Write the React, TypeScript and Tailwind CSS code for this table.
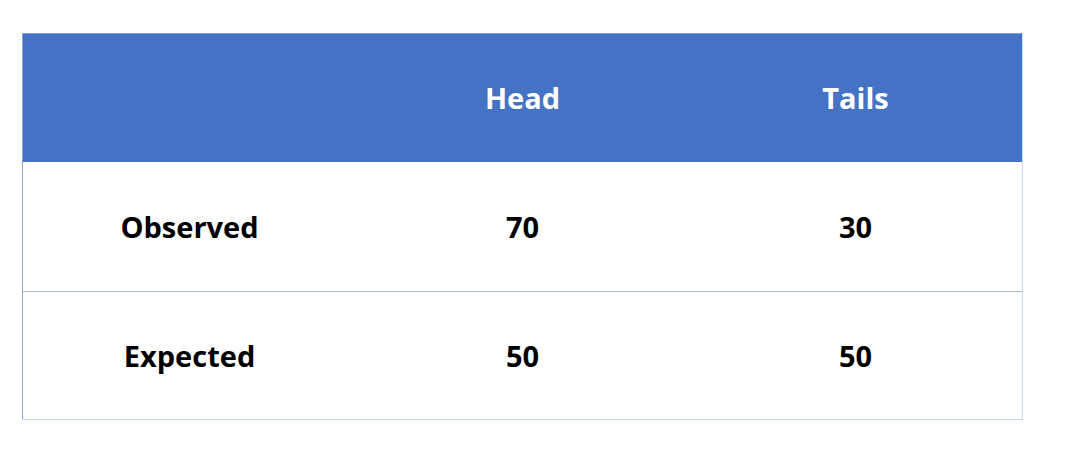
const rows = [
  { label: "Observed", head: "70", tails: "30" },
  { label: "Expected", head: "50", tails: "50" },
]

export default function App() {
  return (
    <div className="w-[1075px] h-[469px] bg-white pl-[22px] pt-[33px] font-['Open_Sans',sans-serif]">
      <div className="w-[1001px] border-l border-l-[#8eaadb] border-r border-r-[#cbd9ef] border-b border-b-[#cbd9ef]">
        <div className="grid grid-cols-3 h-[129px] bg-[#4472c4] items-center text-white text-[29px] font-bold border-t border-t-[#7f9fd6]">
          <div />
          <div className="text-center">Head</div>
          <div className="text-center">Tails</div>
        </div>
        {rows.map((r, i) => (
          <div
            key={r.label}
            className={
              i === 0
                ? "grid grid-cols-3 h-[130px] items-center text-black text-[29px] font-bold border-b border-b-[#a5b9e2]"
                : "grid grid-cols-3 h-[127px] items-center text-black text-[29px] font-bold"
            }
          >
            <div className="text-center">{r.label}</div>
            <div className="text-center">{r.head}</div>
            <div className="text-center">{r.tails}</div>
          </div>
        ))}
      </div>
    </div>
  )
}
